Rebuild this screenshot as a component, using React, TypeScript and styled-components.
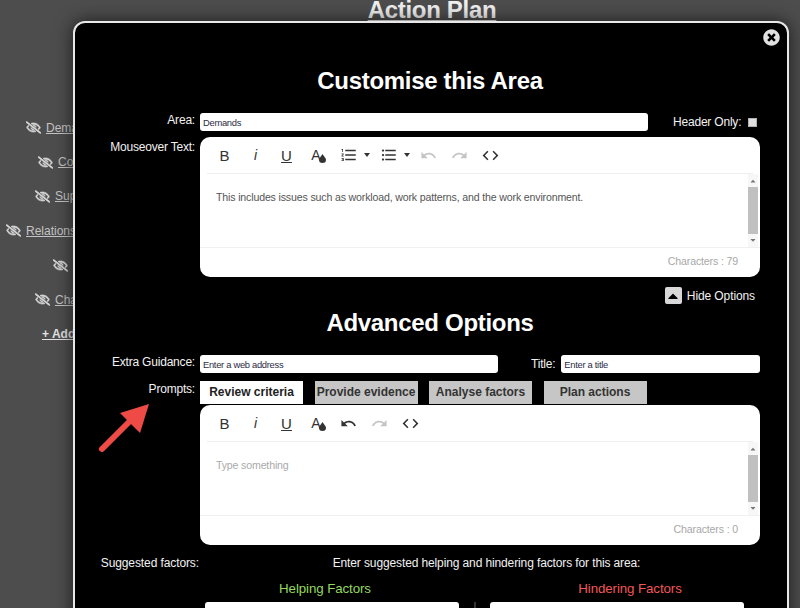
import { ReactNode } from "react";
import styled, { createGlobalStyle } from "styled-components";
import { FaRegEyeSlash, FaTimesCircle, FaCaretUp, FaCaretDown } from "react-icons/fa";
import {
  MdCode,
  MdFormatListBulleted,
  MdFormatListNumbered,
  MdRedo,
  MdUndo,
} from "react-icons/md";

const GlobalStyle = createGlobalStyle`
  html, body {
    margin: 0;
    height: 608px;
    overflow: hidden;
    background: #4d4d4d;
    font-family: "Liberation Sans", Arial, sans-serif;
  }
`;

const Page = styled.div`
  position: relative;
  width: 800px;
  height: 608px;
  overflow: hidden;
`;

const PageTitle = styled.h1`
  margin: 0;
  padding-left: 64px;
  height: 22px;
  line-height: 20px;
  text-align: center;
  font-size: 24px;
  font-weight: bold;
  letter-spacing: -0.3px;
  color: #f0f0f0;
  text-decoration: underline;
`;

const AreaList = styled.ul`
  list-style: none;
  margin: 0;
  padding: 98.5px 0 0;
  width: 120px;
  display: flex;
  flex-direction: column;
  gap: 20px;
`;

const AreaItem = styled.li<{ $left: number }>`
  display: flex;
  align-items: center;
  gap: 5px;
  height: 14.4px;
  padding-left: ${(p) => p.$left}px;
  white-space: nowrap;
  font-size: 12px;
  color: #c4c4c4;
  svg {
    font-size: 15px;
    color: #d8d8d8;
    stroke: #d8d8d8;
    stroke-width: 30px;
  }
`;

const AreaLink = styled.span<{ $bold?: boolean }>`
  text-decoration: underline;
  font-weight: ${(p) => (p.$bold ? "bold" : "normal")};
  color: ${(p) => (p.$bold ? "#e2e2e2" : "#c4c4c4")};
`;

const Modal = styled.div`
  position: absolute;
  left: 73px;
  top: 21px;
  width: 686px;
  min-height: 640px;
  padding: 0 26px 0 0;
  background: #000;
  border: 2px solid #e8e8e8;
  border-radius: 12px;
  box-shadow: 0 0 18px rgba(0, 0, 0, 0.65);
  color: #f2f2f2;
  font-size: 12px;
  letter-spacing: -0.2px;
`;

const CloseButton = styled.span`
  position: absolute;
  top: 6px;
  right: 7px;
  display: flex;
  font-size: 17px;
  color: #e2e2e2;
`;

const ModalTitle = styled.h2<{ $top: number }>`
  margin: ${(p) => p.$top}px -24px 0 0;
  height: 28px;
  line-height: 28px;
  text-align: center;
  font-size: 24px;
  font-weight: bold;
  letter-spacing: -0.3px;
  color: #fff;
`;

const Row = styled.div<{ $top: number }>`
  display: flex;
  align-items: flex-start;
  gap: 5px;
  margin-top: ${(p) => p.$top}px;
`;

const Label = styled.label<{ $wide?: boolean; $drop?: number }>`
  flex: 0 0 ${(p) => (p.$wide ? 124 : 120)}px;
  padding-top: ${(p) => p.$drop ?? 0}px;
  text-align: right;
  line-height: 14px;
  white-space: nowrap;
  letter-spacing: ${(p) => (p.$wide ? -0.1 : -0.2)}px;
`;

const Fields = styled.div`
  flex: 1;
  min-width: 0;
  display: flex;
  align-items: center;
`;

const TextBox = styled.input<{ $width?: number }>`
  box-sizing: border-box;
  width: ${(p) => (p.$width ? `${p.$width}px` : "100%")};
  height: 18px;
  padding: 0 3px;
  border: none;
  border-radius: 3px;
  background: #fff;
  font-family: inherit;
  font-size: 9.4px;
  letter-spacing: -0.3px;
  color: #2b2b44;
  outline: none;
  &::placeholder {
    color: #2b2b44;
    opacity: 1;
  }
`;

const InlineLabel = styled.span<{ $left: number }>`
  margin: 0 6px 1px ${(p) => p.$left}px;
  white-space: nowrap;
`;

const CheckBox = styled.span`
  width: 9px;
  height: 9px;
  margin-left: 1px;
  background: #e0e0e0;
  border: 1px solid #b0b0b0;
  box-sizing: border-box;
`;

const EditorBox = styled.div`
  width: 560px;
  border-radius: 10px;
  background: #fff;
  color: #333;
  overflow: hidden;
  letter-spacing: normal;
`;

const Toolbar = styled.div`
  display: flex;
  align-items: center;
  height: 36px;
  margin: 0 7px;
  padding-left: 2px;
  border-bottom: 1px solid #eeeeee;
`;

const ToolButton = styled.span<{ $faded?: boolean }>`
  flex: 0 0 31px;
  display: flex;
  justify-content: center;
  align-items: center;
  height: 36px;
  font-size: 15px;
  color: ${(p) => (p.$faded ? "#c4c4c4" : "#333")};
`;

const ColorGlyph = styled.span`
  position: relative;
  font-size: 14px;
  padding-right: 3px;
  svg {
    position: absolute;
    right: -2px;
    bottom: 0;
  }
`;

const ItalicGlyph = styled.i`
  font-size: 14px;
`;

const Caret = styled.span`
  width: 0;
  height: 0;
  margin: 0 3.5px 0 -0.5px;
  border-left: 3.5px solid transparent;
  border-right: 3.5px solid transparent;
  border-top: 4px solid #333;
`;

const EditorBody = styled.div`
  display: flex;
  height: 73px;
`;

const EditorText = styled.div<{ $empty?: boolean }>`
  flex: 1;
  padding: 16px 16px 0;
  font-size: 10.6px;
  letter-spacing: -0.16px;
  line-height: 14px;
  color: ${(p) => (p.$empty ? "#aaaaaa" : "#555555")};
`;

const ScrollBar = styled.div`
  flex: 0 0 10px;
  margin-right: 2px;
  padding: 3px 0;
  box-sizing: border-box;
  display: flex;
  flex-direction: column;
  align-items: center;
  justify-content: space-between;
  background: #f7f7f7;
  font-size: 8px;
  color: #777;
`;

const ScrollThumb = styled.div`
  width: 100%;
  height: 47px;
  background: #c0c0c0;
`;

const StatusBar = styled.div`
  height: 29px;
  line-height: 27px;
  padding-right: 22px;
  border-top: 1px solid #f0f0f0;
  text-align: right;
  font-size: 10.6px;
  letter-spacing: -0.15px;
  color: #a8a8a8;
`;

const OptionsToggle = styled.div`
  display: flex;
  justify-content: flex-end;
  align-items: center;
  gap: 5px;
  height: 17px;
  margin-top: 10px;
  margin-right: 6px;
  letter-spacing: -0.1px;
`;

const ToggleIcon = styled.span`
  display: flex;
  align-items: center;
  justify-content: center;
  width: 17px;
  height: 17px;
  border-radius: 2px;
  background: #d8d8d8;
  color: #000;
  font-size: 16px;
`;

const Tabs = styled.div`
  display: flex;
  gap: 11.5px;
  letter-spacing: normal;
`;

const Tab = styled.span<{ $active?: boolean }>`
  width: 103px;
  height: 23px;
  line-height: 22px;
  text-align: center;
  white-space: nowrap;
  font-size: 12px;
  font-weight: bold;
  color: ${(p) => (p.$active ? "#222" : "#333")};
  background: ${(p) => (p.$active ? "#fff" : "#c6c6c6")};
`;

const Hint = styled.div`
  flex: 1;
  line-height: 14px;
  text-align: center;
  padding-left: 8px;
  letter-spacing: -0.12px;
`;

const FactorGrid = styled.div`
  display: grid;
  grid-template-columns: 254px 31px 254px;
  row-gap: 6px;
  margin: 11px 0 0 130px;
`;

const FactorTitle = styled.div<{ $color: string; $column: number; $nudge: number }>`
  grid-column: ${(p) => p.$column};
  text-align: center;
  line-height: 15px;
  font-size: 13.33px;
  letter-spacing: -0.1px;
  padding-left: ${(p) => Math.max(p.$nudge, 0)}px;
  padding-right: ${(p) => Math.max(-p.$nudge, 0)}px;
  color: ${(p) => p.$color};
`;

const FactorBox = styled.div`
  height: 30px;
  border-radius: 3px;
  background: #fff;
`;

const FactorDivider = styled.span`
  justify-self: center;
  width: 2px;
  background: #333;
`;

const ArrowMark = styled.svg`
  position: absolute;
  left: 96px;
  top: 402px;
`;

function Drop() {
  return (
    <svg width="7" height="9" viewBox="0 0 7 9">
      <path d="M3.5 0 C5 2.5 7 4 7 5.8 A3.5 3.2 0 0 1 0 5.8 C0 4 2 2.5 3.5 0Z" fill="#333" />
    </svg>
  );
}

function BaseTools() {
  return (
    <>
      <ToolButton>B</ToolButton>
      <ToolButton><ItalicGlyph>i</ItalicGlyph></ToolButton>
      <ToolButton><u>U</u></ToolButton>
      <ToolButton><ColorGlyph>A<Drop /></ColorGlyph></ToolButton>
    </>
  );
}

interface EditorProps {
  tools: ReactNode;
  text: string;
  count: number;
  empty?: boolean;
}

function Editor({ tools, text, count, empty }: EditorProps) {
  return (
    <EditorBox>
      <Toolbar>
        <BaseTools />
        {tools}
      </Toolbar>
      <EditorBody>
        <EditorText $empty={empty}>{text}</EditorText>
        <ScrollBar>
          <FaCaretUp />
          <ScrollThumb />
          <FaCaretDown />
        </ScrollBar>
      </EditorBody>
      <StatusBar>Characters : {count}</StatusBar>
    </EditorBox>
  );
}

const areas = [
  { name: "Demands", left: 26 },
  { name: "Control", left: 38 },
  { name: "Support", left: 35 },
  { name: "Relationships", left: 6 },
  { name: "Role", left: 53 },
  { name: "Change", left: 35 },
];

export default function App() {
  return (
    <Page>
      <GlobalStyle />
      <PageTitle>Action Plan</PageTitle>
      <AreaList>
        {areas.map((a) => (
          <AreaItem key={a.name} $left={a.left}>
            <FaRegEyeSlash />
            <AreaLink>{a.name}</AreaLink>
          </AreaItem>
        ))}
        <AreaItem $left={42}>
          <AreaLink $bold>+ Add Area</AreaLink>
        </AreaItem>
      </AreaList>

      <Modal>
        <CloseButton><FaTimesCircle /></CloseButton>
        <ModalTitle $top={44}>Customise this Area</ModalTitle>
        <Row $top={18}>
          <Label>Area:</Label>
          <Fields>
            <TextBox $width={448} defaultValue="Demands" />
            <InlineLabel $left={25}>Header Only:</InlineLabel>
            <CheckBox />
          </Fields>
        </Row>
        <Row $top={6}>
          <Label $drop={3}>Mouseover Text:</Label>
          <Editor
            text="This includes issues such as workload, work patterns, and the work environment."
            count={79}
            tools={
              <>
                <ToolButton><MdFormatListNumbered size={18} /></ToolButton>
                <Caret />
                <ToolButton><MdFormatListBulleted size={18} /></ToolButton>
                <Caret />
                <ToolButton $faded><MdUndo size={17} /></ToolButton>
                <ToolButton $faded><MdRedo size={17} /></ToolButton>
                <ToolButton><MdCode size={19} /></ToolButton>
              </>
            }
          />
        </Row>
        <OptionsToggle>
          <ToggleIcon><FaCaretUp /></ToggleIcon>
          Hide Options
        </OptionsToggle>
        <ModalTitle $top={5}>Advanced Options</ModalTitle>
        <Row $top={18}>
          <Label $drop={0}>Extra Guidance:</Label>
          <Fields>
            <TextBox $width={298} placeholder="Enter a web address" />
            <InlineLabel $left={33}>Title:</InlineLabel>
            <TextBox $width={199} placeholder="Enter a title" />
          </Fields>
        </Row>
        <Row $top={8}>
          <Label $drop={1}>Prompts:</Label>
          <Tabs>
            <Tab $active>Review criteria</Tab>
            <Tab>Provide evidence</Tab>
            <Tab>Analyse factors</Tab>
            <Tab>Plan actions</Tab>
          </Tabs>
        </Row>
        <Row $top={1}>
          <Label />
          <Editor
            empty
            text="Type something"
            count={0}
            tools={
              <>
                <ToolButton><MdUndo size={17} /></ToolButton>
                <ToolButton $faded><MdRedo size={17} /></ToolButton>
                <ToolButton><MdCode size={19} /></ToolButton>
              </>
            }
          />
        </Row>
        <Row $top={11}>
          <Label $wide>Suggested factors:</Label>
          <Hint>Enter suggested helping and hindering factors for this area:</Hint>
        </Row>
        <FactorGrid>
          <FactorTitle $color="#95d75f" $column={1} $nudge={-14}>Helping Factors</FactorTitle>
          <FactorTitle $color="#f25757" $column={3} $nudge={26}>Hindering Factors</FactorTitle>
          <FactorBox />
          <FactorDivider />
          <FactorBox />
        </FactorGrid>
      </Modal>

      <ArrowMark width="56" height="52" viewBox="0 0 56 52">
        <path d="M6 47 L38 15" stroke="#ee4b46" strokeWidth="6" strokeLinecap="round" />
        <path d="M53 2 L24 11 L44 31 Z" fill="#ee4b46" />
      </ArrowMark>
    </Page>
  );
}
